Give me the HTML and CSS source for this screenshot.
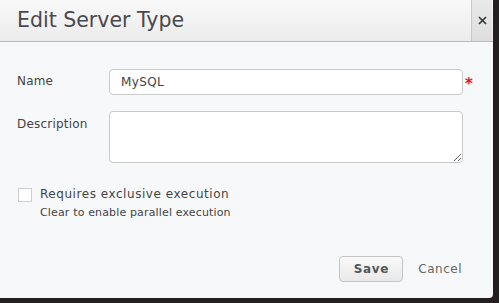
FILE: index.html
```html
<!DOCTYPE html>
<html lang="en">
<head>
    <meta charset="UTF-8">
    <meta name="viewport" content="width=device-width, initial-scale=1.0">
    <title>Edit Server Type</title>
    <link rel="stylesheet" href="styles.css">
</head>
<body>
    <div class="dialog">
        <div class="dialog-header">
            <h1>Edit Server Type</h1>
            <button class="close-btn" title="Close">
                <svg width="9" height="9" viewBox="0 0 9 9"><path d="M1 1 L8 8 M8 1 L1 8" stroke="#333" stroke-width="1.6"/></svg>
            </button>
        </div>

        <form class="dialog-body">
            <div class="field">
                <label class="field-label" for="name">Name</label>
                <input type="text" id="name" class="text-input" value="MySQL">
                <span class="required">*</span>
            </div>

            <div class="field">
                <label class="field-label" for="description">Description</label>
                <textarea id="description" class="text-area"></textarea>
            </div>

            <div class="check-row">
                <input type="checkbox" id="exclusive" class="check">
                <div>
                    <label for="exclusive" class="check-label">Requires exclusive execution</label>
                    <div class="hint">Clear to enable parallel execution</div>
                </div>
            </div>

            <div class="actions">
                <button type="button" class="save-btn">Save</button>
                <a href="#" class="cancel-link">Cancel</a>
            </div>
        </form>
    </div>
</body>
</html>
```
FILE: styles.css
```css
html, body {
    margin: 0;
    padding: 0;
}
body {
    width: 499px;
    height: 303px;
    background-color: #231f20;
    font-family: 'DejaVu Sans', Verdana, sans-serif;
    color: #444;
    overflow: hidden;
}
.dialog {
    width: 493px;
    height: 298px;
    background-color: #f7f8fa;
    border-bottom-right-radius: 4px;
    overflow: hidden;
}
.dialog-header {
    display: flex;
    height: 41px;
    background: linear-gradient(#faf9fa, #ebebeb);
    border-bottom: 1px solid #b9b9b9;
}
.dialog-header h1 {
    flex: 1;
    margin: 0;
    padding: 8px 0 0 17px;
    font-size: 20.5px;
    font-weight: normal;
    color: #48484d;
}
.close-btn {
    width: 21px;
    margin-right: 1px;
    padding: 0;
    border: none;
    border-left: 1px solid #c9c9c9;
    background: linear-gradient(#e9e9e9, #dedede);
    display: flex;
    align-items: center;
    justify-content: center;
}
.dialog-body {
    padding: 27px 0 0 0;
    margin: 0;
}
.field {
    display: flex;
    align-items: flex-start;
    margin-bottom: 17px;
}
.field-label {
    width: 92px;
    padding: 5px 0 0 17px;
    font-size: 12px;
    letter-spacing: 0.2px;
    color: #444;
}
.text-input,
.text-area {
    box-sizing: border-box;
    width: 354px;
    border: 1px solid #cacaca;
    border-radius: 4px;
    background-color: white;
    font-family: 'DejaVu Sans', Verdana, sans-serif;
    font-size: 12px;
    letter-spacing: 0.4px;
    color: #444;
}
.text-input {
    height: 26px;
    padding: 0 11px;
}
.text-area {
    height: 52px;
    margin-top: -1px;
    resize: vertical;
}
.required {
    color: #e8131b;
    font-size: 15px;
    font-weight: bold;
    padding: 6px 0 0 2px;
}
.check-row {
    display: flex;
    align-items: flex-start;
    padding: 7px 0 0 18px;
}
.check {
    width: 14px;
    height: 14px;
    margin: 1px 8px 0 0;
    appearance: none;
    border: 1px solid #cfcfcf;
    background-color: white;
}
.check-label {
    display: block;
    font-size: 12px;
    letter-spacing: 0.55px;
    color: #444;
}
.hint {
    margin-top: 5px;
    font-size: 11px;
    letter-spacing: 0.15px;
    color: #444;
}
.actions {
    display: flex;
    align-items: center;
    justify-content: flex-end;
    padding: 37px 31px 0 0;
}
.save-btn {
    width: 64px;
    height: 26px;
    border: 1px solid #c4c4c4;
    border-radius: 4px;
    background: linear-gradient(#f9f9f9, #e9e9e9);
    font-family: 'DejaVu Sans', Verdana, sans-serif;
    font-size: 12px;
    font-weight: bold;
    letter-spacing: 0.6px;
    color: #555;
}
.cancel-link {
    margin-left: 15px;
    font-size: 12px;
    letter-spacing: 0.5px;
    color: #666;
    text-decoration: none;
}
```
